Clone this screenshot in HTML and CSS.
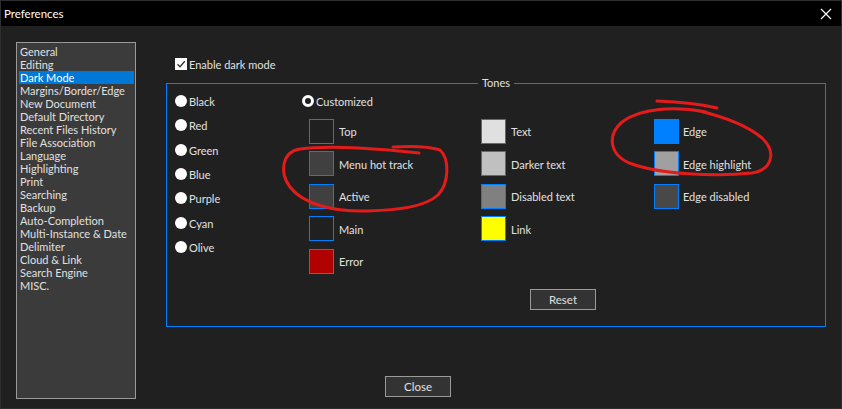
FILE: index.html
```html
<!DOCTYPE html>
<html>
<head>
<meta charset="utf-8">
<title>Preferences</title>
<link rel="stylesheet" href="styles.css">
</head>
<body>
<div class="window">
  <div class="titlebar">
    <span class="title">Preferences</span>
    <svg class="close-x" width="12" height="12" viewBox="0 0 12 12"><path d="M1 1 L11 11 M11 1 L1 11" stroke="#fff" stroke-width="1.2" fill="none"/></svg>
  </div>
  <div class="content">
    <ul class="list">
      <li>General</li>
      <li>Editing</li>
      <li class="selected">Dark Mode</li>
      <li>Margins/Border/Edge</li>
      <li>New Document</li>
      <li>Default Directory</li>
      <li>Recent Files History</li>
      <li>File Association</li>
      <li>Language</li>
      <li>Highlighting</li>
      <li>Print</li>
      <li>Searching</li>
      <li>Backup</li>
      <li>Auto-Completion</li>
      <li>Multi-Instance &amp; Date</li>
      <li>Delimiter</li>
      <li>Cloud &amp; Link</li>
      <li>Search Engine</li>
      <li>MISC.</li>
    </ul>
    <div class="main">
      <div class="check-row">
        <svg class="checkbox" width="12" height="12" viewBox="0 0 12 12"><rect x="0" y="0" width="12" height="12" fill="#fff"/><path d="M2.5 6.2 L5 8.7 L9.8 3.2" stroke="#333" stroke-width="1.3" fill="none"/></svg>
        <span class="label">Enable dark mode</span>
      </div>
      <div class="group">
        <span class="legend">Tones</span>
        <div class="radios">
          <div class="radio-row"><span class="dot"></span><span class="label">Black</span></div>
          <div class="radio-row"><span class="dot"></span><span class="label">Red</span></div>
          <div class="radio-row"><span class="dot"></span><span class="label">Green</span></div>
          <div class="radio-row"><span class="dot"></span><span class="label">Blue</span></div>
          <div class="radio-row"><span class="dot"></span><span class="label">Purple</span></div>
          <div class="radio-row"><span class="dot"></span><span class="label">Cyan</span></div>
          <div class="radio-row"><span class="dot"></span><span class="label">Olive</span></div>
        </div>
        <div class="custom">
          <div class="radio-row"><span class="dot ring"></span><span class="label">Customized</span></div>
          <div class="swatches">
            <div class="col col1">
              <div class="sw-item"><span class="sw sw-top"></span><span class="label">Top</span></div>
              <div class="sw-item"><span class="sw sw-hot"></span><span class="label">Menu hot track</span></div>
              <div class="sw-item"><span class="sw sw-active"></span><span class="label">Active</span></div>
              <div class="sw-item"><span class="sw sw-main"></span><span class="label">Main</span></div>
              <div class="sw-item"><span class="sw sw-error"></span><span class="label">Error</span></div>
            </div>
            <div class="col col2">
              <div class="sw-item"><span class="sw sw-text"></span><span class="label">Text</span></div>
              <div class="sw-item"><span class="sw sw-darker"></span><span class="label">Darker text</span></div>
              <div class="sw-item"><span class="sw sw-disabled"></span><span class="label">Disabled text</span></div>
              <div class="sw-item"><span class="sw sw-link"></span><span class="label">Link</span></div>
            </div>
            <div class="col col3">
              <div class="sw-item"><span class="sw sw-edge"></span><span class="label">Edge</span></div>
              <div class="sw-item"><span class="sw sw-edgehl"></span><span class="label">Edge highlight</span></div>
              <div class="sw-item"><span class="sw sw-edgedis"></span><span class="label">Edge disabled</span></div>
            </div>
          </div>
          <div class="reset-row"><button class="btn">Reset</button></div>
        </div>
      </div>
      <div class="footer"><button class="btn">Close</button></div>
    </div>
  </div>
  <svg class="marks" width="842" height="409" viewBox="0 0 842 409">
    <g stroke="#e31b1b" stroke-width="3" fill="none" stroke-linecap="round" stroke-linejoin="round">
      <path d="M419 153 C385 149 330 145 300 149 C282 152 279 172 290 187 C303 204 333 212 368 211 C398 210 425 207 438 195 C450 182 449 158 440 150 C428 146 410 146 393 147"/>
      <path d="M657 101 C680 102 700 104 717 108"/>
      <path d="M706 112 C675 106 640 108 622 122 C606 136 610 156 632 164 C660 174 715 177 752 173 C772 170 777 152 762 138 C748 126 728 118 700 111"/>
    </g>
  </svg>
</div>
</body>
</html>
```

FILE: styles.css
```css
* { box-sizing: border-box; }
html, body { margin: 0; padding: 0; background: #202020; }
body {
  font-family: Lato, "Liberation Sans", sans-serif;
  font-size: 11px;
  color: #e0e0e0;
}
.window {
  position: relative;
  width: 842px;
  height: 409px;
  border: 1px solid #2e2e2e;
  background: #202020;
  overflow: hidden;
}
.titlebar {
  height: 25px;
  background: #000;
  display: flex;
  align-items: center;
  justify-content: space-between;
  padding-left: 3px;
  padding-right: 9px;
}
.title { color: #fff; font-size: 11.5px; }
.close-x { display: block; }
.content { display: flex; }
.list {
  list-style: none;
  margin: 16px 0 0 15px;
  padding: 1px;
  width: 120px;
  height: 357px;
  border: 1px solid #9a9a9a;
  background: #3b3b3b;
  color: #e0e0e0;
}
.list li {
  height: 13px;
  line-height: 13px;
  padding-left: 1px;
  margin-left: 1px;
  white-space: nowrap;
}
.list li:first-child { margin-top: 1px; }
.list li.selected { background: #0078d7; color: #fff; }
.main {
  margin-left: 30px;
  display: flex;
  flex-direction: column;
}
.check-row {
  margin-top: 32px;
  padding-left: 9px;
  height: 12px;
  display: flex;
  align-items: center;
  gap: 2px;
}
.label { position: relative; top: 0.5px; }
.checkbox { display: block; }
.group {
  position: relative;
  margin-top: 13px;
  width: 660px;
  height: 244px;
  border: 1px solid #0080ff;
  padding: 5px 0 0 8px;
  display: flex;
}
.legend {
  position: absolute;
  top: -8px;
  left: 50%;
  transform: translateX(-50%);
  padding: 0 4px;
  background: #202020;
  line-height: 14px;
}
.radios { width: 127px; }
.radio-row {
  height: 24.33px;
  display: flex;
  align-items: center;
  gap: 2px;
}
.dot {
  width: 12px;
  height: 12px;
  border-radius: 50%;
  background: #fff;
  flex: none;
}
.dot.ring {
  background: #202020;
  border: 3px solid #fff;
}
.custom { display: flex; flex-direction: column; }
.swatches {
  display: flex;
  margin-top: 5.67px;
  margin-left: 7px;
}
.col { display: flex; flex-direction: column; gap: 7.5px; }
.col1 { width: 172px; }
.col2 { width: 173px; }
.sw-item {
  height: 25px;
  display: flex;
  align-items: center;
  gap: 5px;
}
.col3 .sw-item { gap: 4px; }
.sw {
  width: 25px;
  height: 25px;
  border: 1px solid #0080ff;
  flex: none;
}
.sw-top, .sw-main { background: #202020; }
.sw-hot, .sw-active { background: #404040; }
.sw-error { background: #b00000; }
.sw-text { background: #e0e0e0; }
.sw-darker { background: #c0c0c0; }
.sw-disabled { background: #808080; }
.sw-link { background: #ffff00; }
.sw-edge { background: #0080ff; }
.sw-edgehl { background: #a0a0a0; }
.sw-edgedis { background: #484848; }
.reset-row { margin-top: 15px; margin-left: 228px; }
.btn {
  width: 66px;
  height: 21px;
  border: 1px solid #9a9a9a;
  background: #333333;
  color: #e0e0e0;
  font-family: Lato, "Liberation Sans", sans-serif;
  font-size: 11.5px;
  padding: 0;
  display: block;
}
.footer { margin-top: 49px; margin-left: 219px; }
.marks {
  position: absolute;
  left: -1px;
  top: -1px;
  pointer-events: none;
}
```
